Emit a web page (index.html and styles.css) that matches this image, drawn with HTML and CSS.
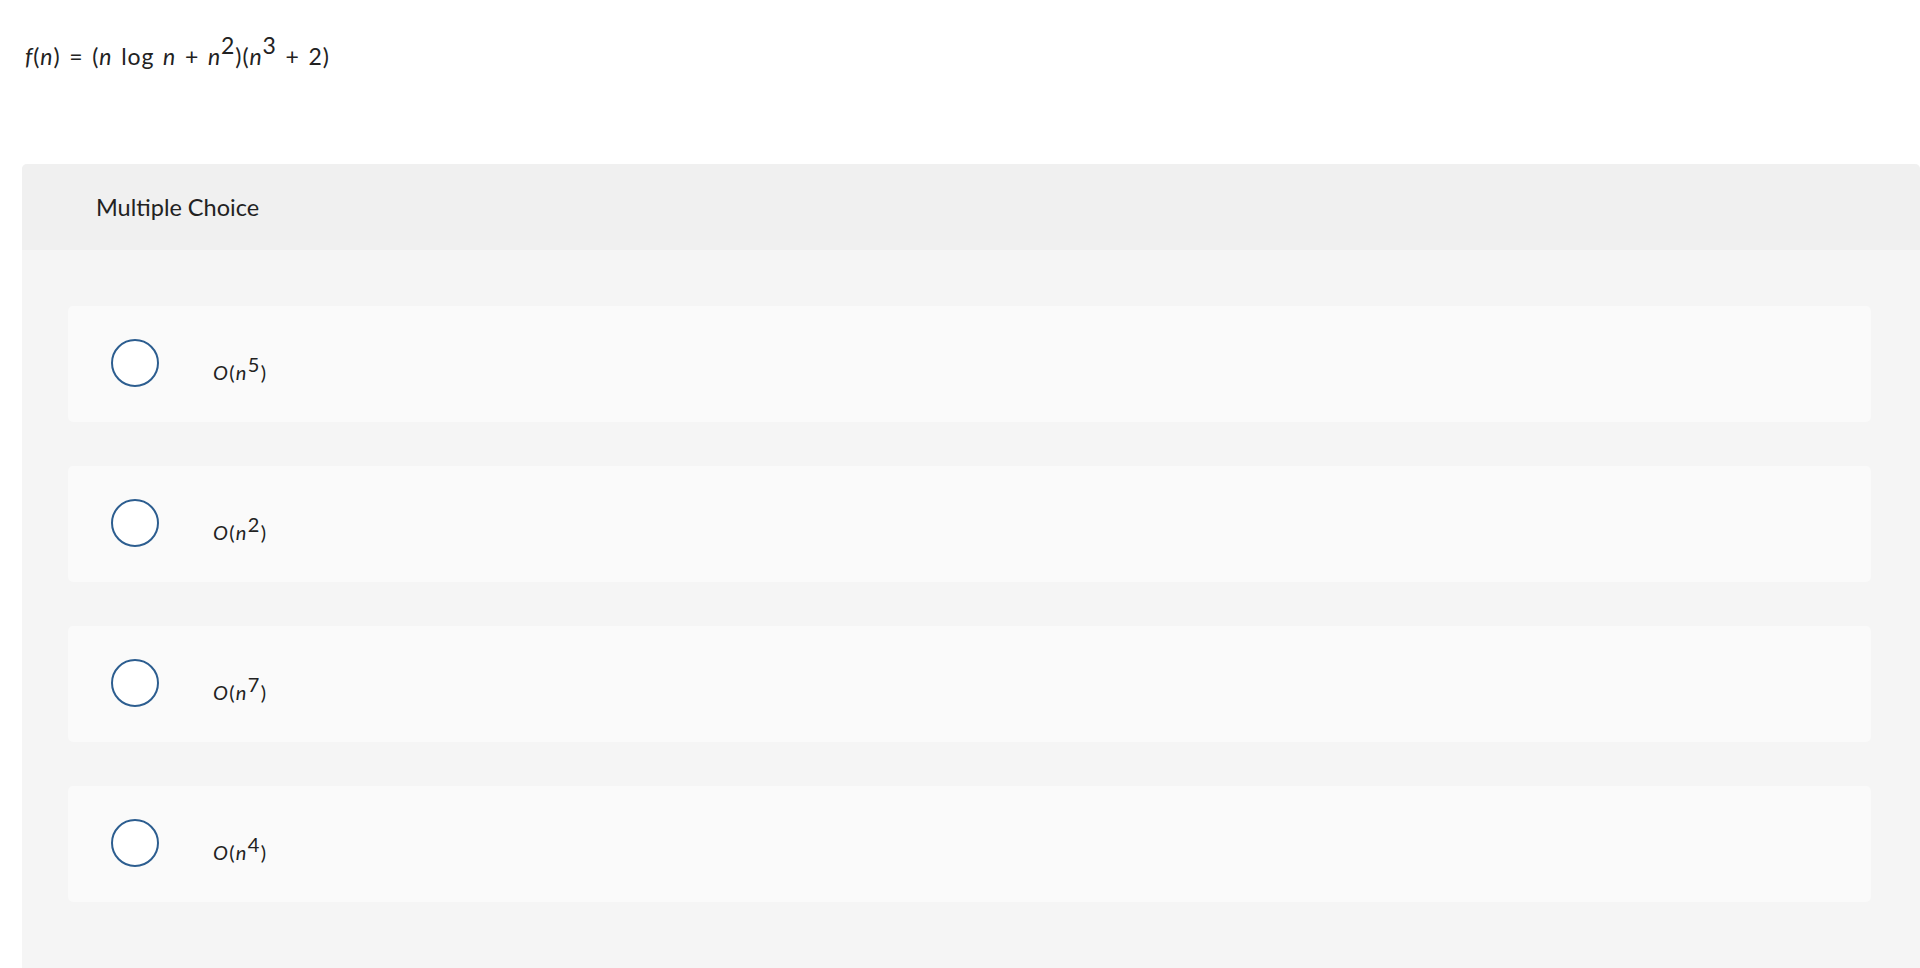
FILE: index.html
```html
<!DOCTYPE html>
<html lang="en">
<head>
<meta charset="utf-8">
<title>Multiple Choice</title>
<link rel="stylesheet" href="styles.css">
</head>
<body>
<div class="page">
  <p class="stem"><i>f</i>(<i>n</i>) = (<i>n</i> log <i>n</i> + <i>n</i><sup>2</sup>)(<i>n</i><sup>3</sup> + 2)</p>
  <section class="panel">
    <header class="panel-head">Multiple Choice</header>
    <div class="panel-body">
      <label class="option"><span class="radio"></span><span class="answer"><i>O</i>(<i>n</i><sup>5</sup>)</span></label>
      <label class="option"><span class="radio"></span><span class="answer"><i>O</i>(<i>n</i><sup>2</sup>)</span></label>
      <label class="option"><span class="radio"></span><span class="answer"><i>O</i>(<i>n</i><sup>7</sup>)</span></label>
      <label class="option"><span class="radio"></span><span class="answer"><i>O</i>(<i>n</i><sup>4</sup>)</span></label>
    </div>
  </section>
</div>
</body>
</html>
```
FILE: styles.css
```css
html, body {
  margin: 0;
  padding: 0;
  background: #ffffff;
}
body {
  font-family: Lato, "Open Sans", "Liberation Sans", sans-serif;
  color: #222222;
  overflow: hidden;
  height: 968px;
}
.page {
  padding-left: 22px;
}
.stem {
  margin: 0;
  padding: 41px 0 0 3px;
  height: 123px;
  font-size: 23px;
  line-height: 30px;
  word-spacing: 2px;
  letter-spacing: 0.9px;
}
sup {
  font-size: 1em;
  line-height: 0;
  vertical-align: 0.5em;
}
.panel {
  background: #f5f5f5;
  border-radius: 5px 5px 0 0;
  overflow: hidden;
}
.panel-head {
  height: 86px;
  display: flex;
  align-items: center;
  padding-left: 74px;
  background: #f0f0f0;
  font-size: 23.5px;
}
.panel-body {
  display: flex;
  flex-direction: column;
  gap: 44px;
  padding: 56px 49px 80px 46px;
}
.option {
  height: 116px;
  display: flex;
  align-items: center;
  padding-left: 43px;
  background: #fafafa;
  border-radius: 5px;
}
.radio {
  width: 44px;
  height: 44px;
  border: 2px solid #2c5d8f;
  border-radius: 50%;
  background: #ffffff;
  flex: none;
  margin-top: -2px;
}
.answer {
  margin-left: 54px;
  margin-top: 16px;
  font-size: 20px;
  line-height: 26px;
  letter-spacing: 1.3px;
}
.answer sup {
  vertical-align: 0.4em;
}
```
